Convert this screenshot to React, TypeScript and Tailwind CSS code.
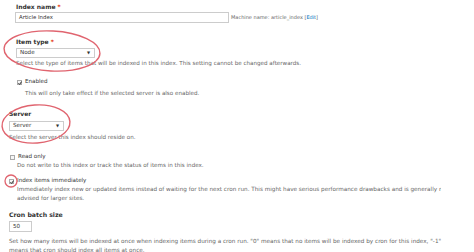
import React from 'react';

const font = { fontFamily: '"DejaVu Sans", Verdana, sans-serif' };

function Label({ text, required, className = '' }: { text: string; required?: boolean; className?: string }) {
  return (
    <div className={`h-[8px] flex items-center text-[6px] font-bold text-[#333] leading-none ${className}`}>
      {text}
      {required && <span className="ml-[2px] text-[#e32700]">*</span>}
    </div>
  );
}

function Desc({ children, className = '' }: { children: React.ReactNode; className?: string }) {
  return (
    <div className={`h-[8px] flex items-center text-[5.6px] text-[#666] leading-none whitespace-nowrap ${className}`}>
      {children}
    </div>
  );
}

function Checkbox({ checked }: { checked?: boolean }) {
  return (
    <span className="relative w-[5px] h-[5px] border border-[#aaa] bg-[#f6f6f6] shrink-0">
      {checked && (
        <svg viewBox="0 0 10 10" className="absolute left-0 top-0 w-[4px] h-[4px]">
          <path d="M1 5.5 L4 8.5 L9 1.5" stroke="#222" strokeWidth="2.4" fill="none" />
        </svg>
      )}
    </span>
  );
}

function Select({ value, width }: { value: string; width: string }) {
  return (
    <div className={`${width} h-[10px] border border-[#ccc] bg-white flex items-center justify-between pl-[3px] pr-[4px] text-[5.6px] text-[#333] leading-none`}>
      <span>{value}</span>
      <span className="text-[4px]">▼</span>
    </div>
  );
}

export default function App() {
  return (
    <div className="relative w-[474px] h-[252px] overflow-hidden bg-white" style={font}>
      {/* Top block */}
      <div className="pl-[15px]">
        <Label text="Index name" required className="mt-[3px] pl-px" />
        <div className="mt-px flex items-center h-[11px]">
          <div className="w-[214px] h-[11px] border border-[#ccc] bg-white flex items-center pl-[3px] text-[5.4px] text-[#333] leading-none">
            Article Index
          </div>
          <span className="ml-[2px] text-[5px] text-[#666] whitespace-nowrap leading-none">
            Machine name: article_index [<span className="text-[#0074bd]">Edit</span>]
          </span>
        </div>

        <Label text="Item type" required className="mt-[15px] pl-px" />
        <div className="mt-[2px] pl-px">
          <Select value="Node" width="w-[79px]" />
        </div>
        <Desc className="mt-[2px] pl-px">
          Select the type of items that will be indexed in this index. This setting cannot be changed afterwards.
        </Desc>

        <div className="mt-[10px] h-[8px] flex items-center gap-[3px] pl-[2px] text-[5.6px] text-[#333] leading-none">
          <Checkbox checked />
          <span>Enabled</span>
        </div>
        <Desc className="mt-[4px] pl-[10px]">
          This will only take effect if the selected server is also enabled.
        </Desc>
      </div>

      {/* Bottom block */}
      <div className="pl-[8px]">
        <Label text="Server" className="mt-[12px] pl-px" />
        <div className="mt-[3px] pl-px">
          <Select value="Server" width="w-[55px]" />
        </div>
        <Desc className="mt-[3px] pl-px">Select the server this index should reside on.</Desc>

        <div className="mt-[11px] h-[8px] flex items-center gap-[3px] pl-[2px] text-[5.6px] text-[#333] leading-none">
          <Checkbox />
          <span>Read only</span>
        </div>
        <Desc className="mt-px pl-[9px]">
          Do not write to this index or track the status of items in this index.
        </Desc>

        <div className="mt-[7px] h-[8px] flex items-center gap-[3px] pl-px text-[5.6px] text-[#333] leading-none">
          <Checkbox checked />
          <span>Index items immediately</span>
        </div>
        <div className="ml-[9px] w-[424px] overflow-hidden text-[5.7px] leading-[9px] text-[#666] whitespace-nowrap">
          Immediately index new or updated items instead of waiting for the next cron run. This might have serious performance drawbacks and is generally not
          <br />
          advised for larger sites.
        </div>

        <div className="mt-[7px] h-[10px] flex items-center text-[6.2px] font-bold text-[#333] pl-px leading-none">
          Cron batch size
        </div>
        <div className="mt-px ml-px w-[23px] h-[11px] border border-[#ccc] bg-white flex items-center pl-[3px] text-[5.6px] text-[#333] leading-none">
          50
        </div>
        <div className="mt-[5px] pl-px text-[5.7px] leading-[9px] text-[#666] whitespace-nowrap">
          Set how many items will be indexed at once when indexing items during a cron run. "0" means that no items will be indexed by cron for this index, "-1"
          <br />
          means that cron should index all items at once.
        </div>
      </div>

      {/* Annotation circles */}
      <svg className="absolute inset-0 pointer-events-none" width="474" height="252">
        <ellipse cx="52" cy="51" rx="48" ry="20" transform="rotate(3 52 51)" fill="none" stroke="#e0646f" strokeWidth="1.4" />
        <ellipse cx="36" cy="124" rx="34" ry="19" transform="rotate(-4 36 124)" fill="none" stroke="#e0646f" strokeWidth="1.4" />
        <circle cx="11" cy="181" r="6" fill="none" stroke="#e0646f" strokeWidth="1.3" />
      </svg>
    </div>
  );
}
